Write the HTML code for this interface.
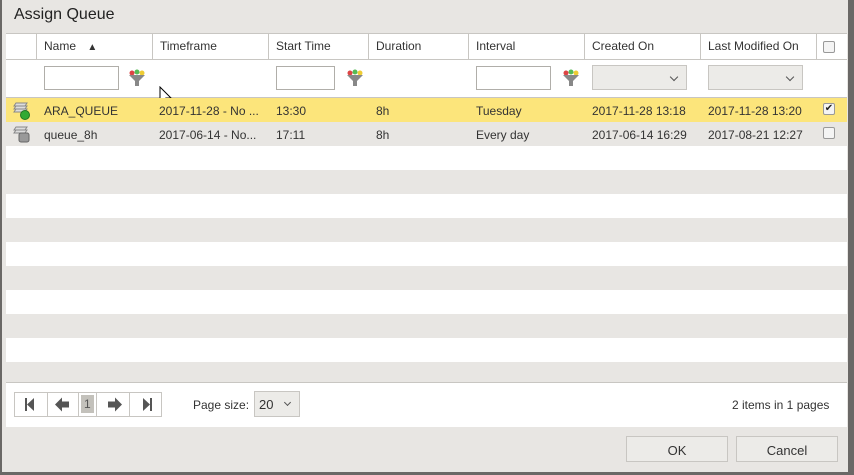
<!DOCTYPE html>
<html><head><style>
*{box-sizing:border-box;margin:0;padding:0}
body{width:854px;height:475px;background:#6a6866;font-family:"Liberation Sans",sans-serif;font-size:12px;color:#333;position:relative;overflow:hidden}
.dlg{position:absolute;left:2px;top:0;width:846px;height:472px;background:#e8e6e3}
.title{position:absolute;left:12px;top:6px;font-size:16px;color:#222}
.grid{position:absolute;left:6px;top:33px;width:841px;height:393px;background:#fff;border-top:1px solid #c8c6c2}
.abs{position:absolute}
.hd{position:absolute;top:0;height:26px;border-right:1px solid #c8c6c2;border-bottom:1px solid #c8c6c2;padding:5px 0 0 7px;color:#333}
.row{position:absolute;left:0;width:841px;height:24px}
.c{position:absolute;top:6px}
.inp{position:absolute;height:24px;border:1px solid #b0aea9;background:#fff}
.sel{position:absolute;height:25px;width:95px;border:1px solid #c8c6c2;background:#ecebe8}
.sel:after{content:"";position:absolute;right:9px;top:8px;width:5px;height:5px;border-right:1px solid #555;border-bottom:1px solid #555;transform:rotate(45deg)}
.cb{position:absolute;width:12px;height:12px;border:1px solid #999;border-radius:2px;background:#f4f4f4}
.btn{position:absolute;top:436px;height:26px;border:1px solid #c8c6c2;background:#ecebe8;text-align:center;padding-top:6px;font-size:13px}
.pb{position:absolute;top:10px;height:25px;border:1px solid #c8c6c2;background:#fff}
</style></head><body>
<div class="dlg">
<div class="title">Assign Queue</div>
</div>
<div class="grid">
<div class="hd" style="left:0;width:31px"></div>
<div class="hd" style="left:31px;width:116px">Name <span style="font-size:10px;margin-left:8px">▲</span></div>
<div class="hd" style="left:147px;width:116px">Timeframe</div>
<div class="hd" style="left:263px;width:100px">Start Time</div>
<div class="hd" style="left:363px;width:100px">Duration</div>
<div class="hd" style="left:463px;width:116px">Interval</div>
<div class="hd" style="left:579px;width:116px">Created On</div>
<div class="hd" style="left:695px;width:116px">Last Modified On</div>
<div class="hd" style="left:811px;width:30px;border-right:none"></div>
<div class="cb" style="left:817px;top:7px"></div>
<div class="abs" style="left:0;top:26px;width:841px;height:38px;border-bottom:1px solid #c8c6c2"></div>
<div class="inp" style="left:38px;top:32px;width:75px"></div>
<div class="inp" style="left:270px;top:32px;width:59px"></div>
<div class="inp" style="left:470px;top:32px;width:75px"></div>
<svg class="abs" style="left:122px;top:35px" width="18" height="18"><circle cx="4" cy="4" r="2.5" fill="#d44"/><circle cx="9" cy="3" r="2.5" fill="#5b5"/><circle cx="14" cy="4" r="2.5" fill="#ec3"/><path d="M1 6h16l-6 6v5h-4v-5z" fill="#888"/></svg>
<svg class="abs" style="left:340px;top:35px" width="18" height="18"><circle cx="4" cy="4" r="2.5" fill="#d44"/><circle cx="9" cy="3" r="2.5" fill="#5b5"/><circle cx="14" cy="4" r="2.5" fill="#ec3"/><path d="M1 6h16l-6 6v5h-4v-5z" fill="#888"/></svg>
<svg class="abs" style="left:556px;top:35px" width="18" height="18"><circle cx="4" cy="4" r="2.5" fill="#d44"/><circle cx="9" cy="3" r="2.5" fill="#5b5"/><circle cx="14" cy="4" r="2.5" fill="#ec3"/><path d="M1 6h16l-6 6v5h-4v-5z" fill="#888"/></svg>
<div class="sel" style="left:586px;top:31px"></div>
<div class="sel" style="left:702px;top:31px"></div>
<svg class="abs" style="left:153px;top:52px" width="14" height="22"><path d="M1 1v16l4-4 3 7 2-1-3-7h5z" fill="#fff" stroke="#000"/></svg>

<div class="row" style="top:64px;background:#fce57b"></div>
<div class="row" style="top:88px;background:#e8e6e3"></div>
<div class="row" style="top:136px;background:#e8e6e3"></div>
<div class="row" style="top:184px;background:#e8e6e3"></div>
<div class="row" style="top:232px;background:#e8e6e3"></div>
<div class="row" style="top:280px;background:#e8e6e3"></div>
<div class="row" style="top:328px;background:#e8e6e3"></div>
<div class="abs" style="left:0;top:348px;width:841px;height:45px;border-top:1px solid #c8c6c2;background:#fff"></div>

<svg class="abs" style="left:7px;top:67px" width="20" height="20"><path d="M3 2h11l-2 3H1z" fill="#ddd" stroke="#888"/><path d="M3 5h11l-2 3H1z" fill="#ddd" stroke="#888"/><path d="M3 8h11l-2 3H1z" fill="#ddd" stroke="#888"/><circle cx="12" cy="14" r="4.5" fill="#3a3" stroke="#272"/></svg>
<svg class="abs" style="left:7px;top:91px" width="20" height="20"><path d="M3 2h11l-2 3H1z" fill="#ddd" stroke="#888"/><path d="M3 5h11l-2 3H1z" fill="#ddd" stroke="#888"/><rect x="6" y="8" width="10" height="9" rx="2" fill="#999" stroke="#666"/></svg>

<div class="row" style="top:64px">
<span class="c" style="left:38px">ARA_QUEUE</span><span class="c" style="left:153px">2017-11-28 - No ...</span><span class="c" style="left:270px">13:30</span><span class="c" style="left:370px">8h</span><span class="c" style="left:470px">Tuesday</span><span class="c" style="left:586px">2017-11-28 13:18</span><span class="c" style="left:702px">2017-11-28 13:20</span>
<div class="cb" style="left:817px;top:5px;font-size:10px;line-height:10px;text-align:center;color:#222">✔</div></div>
<div class="row" style="top:88px">
<span class="c" style="left:38px">queue_8h</span><span class="c" style="left:153px">2017-06-14 - No...</span><span class="c" style="left:270px">17:11</span><span class="c" style="left:370px">8h</span><span class="c" style="left:470px">Every day</span><span class="c" style="left:586px">2017-06-14 16:29</span><span class="c" style="left:702px">2017-08-21 12:27</span>
<div class="cb" style="left:817px;top:5px"></div></div>

<div class="abs" style="left:8px;top:358px">
<div class="pb" style="left:0;top:0;width:34px"><svg width="32" height="23"><rect x="10" y="5" width="2" height="13" fill="#555"/><path d="M12 11.5l7-6.5v13z" fill="#555"/></svg></div>
<div class="pb" style="left:33px;top:0;width:32px"><svg width="30" height="23"><path d="M7 11.5l7-7v4h7v6h-7v4z" fill="#555"/></svg></div>
<div class="pb" style="left:64px;top:0;width:19px"><div style="position:absolute;left:2px;top:2px;width:13px;height:18px;background:#c3c1bb;color:#555;padding:2px 0 0 3px">1</div></div>
<div class="pb" style="left:82px;top:0;width:34px"><svg width="32" height="23"><path d="M25 11.5l-7-7v4h-7v6h7v4z" fill="#555"/></svg></div>
<div class="pb" style="left:115px;top:0;width:33px"><svg width="32" height="23"><rect x="20" y="5" width="2" height="13" fill="#555"/><path d="M20 11.5l-7-6.5v13z" fill="#555"/></svg></div>
</div>
<div class="abs" style="left:187px;top:364px">Page size:</div>
<div class="abs" style="left:248px;top:357px;width:46px;height:26px;border:1px solid #c8c6c2;background:#ecebe8;padding:5px 0 0 4px;font-size:13px">20<span style="position:absolute;right:9px;top:8px;width:5px;height:5px;border-right:1px solid #555;border-bottom:1px solid #555;transform:rotate(45deg)"></span></div>
<div class="abs" style="left:726px;top:364px">2 items in 1 pages</div>
</div>
<div class="btn" style="left:626px;width:102px">OK</div>
<div class="btn" style="left:736px;width:102px">Cancel</div>
</body></html>
